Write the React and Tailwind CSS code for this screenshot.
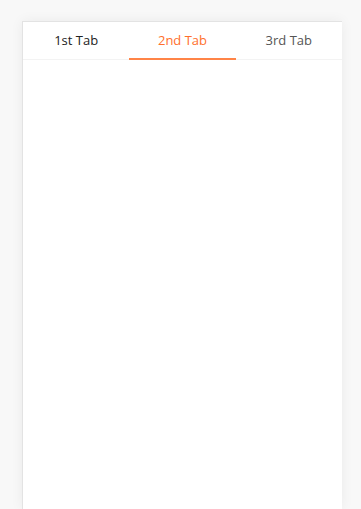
import { useState } from "react"

const tabs = ["1st Tab", "2nd Tab", "3rd Tab"]

const App = () => {
  const [active, setActive] = useState(1)

  return (
    <div className="min-h-[509px] bg-[#f8f8f8] pt-[21px] pl-[22px] overflow-hidden">
      <div className="w-[320px] h-[488px] bg-white border-t border-l border-[#e3e3e3] shadow-[0_0_12px_rgba(0,0,0,0.06)] font-['Open_Sans',sans-serif]">
        <div className="flex h-[38px] border-b border-[#f3f3f3]">
          {tabs.map((tab, i) => (
            <button
              key={tab}
              onClick={() => setActive(i)}
              className={`flex-1 relative text-[13px] ${
                i === active ? "text-[#ff6f2c]" : i === 0 ? "text-[#222]" : "text-[#555]"
              }`}
            >
              {tab}
              {i === active && (
                <span className="absolute left-0 right-0 bottom-[-1px] h-[2px] bg-[#ff8447]" />
              )}
            </button>
          ))}
        </div>
      </div>
    </div>
  )
}

export default App
